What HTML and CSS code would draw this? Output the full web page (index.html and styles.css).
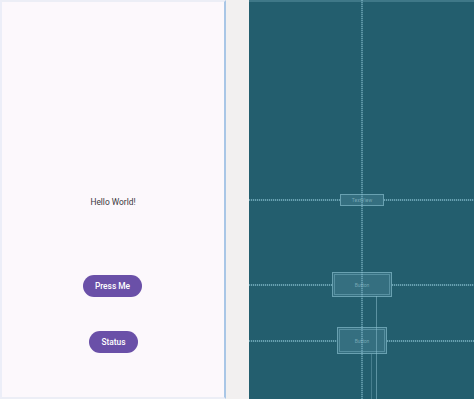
FILE: index.html
```html
<!DOCTYPE html>
<html>
<head>
<meta charset="utf-8">
<link rel="stylesheet" href="styles.css">
</head>
<body>
<div class="editor">
  <div class="design">
    <div class="screen">
      <div class="hello">Hello World!</div>
      <div class="btn btn-press">Press Me</div>
      <div class="btn btn-status">Status</div>
    </div>
  </div>
  <div class="gap"></div>
  <div class="blueprint">
    <div class="topline"></div>
    <div class="vline center"></div>
    <div class="hline" style="top:200px;left:0;width:91px"></div>
    <div class="hline" style="top:200px;left:135px;width:90px"></div>
    <div class="hline" style="top:285px;left:0;width:83px"></div>
    <div class="hline" style="top:285px;left:143px;width:82px"></div>
    <div class="hline" style="top:341px;left:0;width:88px"></div>
    <div class="hline" style="top:341px;left:138px;width:87px"></div>
    <div class="solid" style="left:127px;top:296px;height:103px"></div>
    <div class="solid faint" style="left:122px;top:354px;height:45px"></div>
    <div class="node tv">TextView</div>
    <div class="node b1"><span>Button</span></div>
    <div class="node b2"><span>Button</span></div>
  </div>
</div>
</body>
</html>
```
FILE: styles.css
```css
* { box-sizing: border-box; }
html, body { margin: 0; padding: 0; }
body {
  width: 474px;
  height: 399px;
  overflow: hidden;
  font-family: Roboto, "Noto Sans", sans-serif;
  background: #f2f0f0;
}
.editor {
  display: flex;
  height: 399px;
}
.design {
  width: 226px;
  height: 399px;
  border-top: 2px solid #eceef6;
  border-left: 2px solid #eceef8;
  border-right: 2px solid #a9c6e6;
  border-bottom: 2px solid #eceef6;
  background: #fcf8fc;
}
.screen {
  display: flex;
  flex-direction: column;
  align-items: center;
  padding-top: 194px;
  padding-right: 2px;
}
.hello {
  font-size: 8.4px;
  line-height: 12px;
  color: #3a373d;
  margin-left: 2px;
}
.btn {
  height: 22px;
  border-radius: 11px;
  background: #6a50a8;
  color: #ffffff;
  font-size: 8.4px;
  font-weight: 500;
  display: flex;
  align-items: center;
  justify-content: center;
}
.btn-press {
  width: 59px;
  margin-top: 67px;
  margin-left: 1px;
}
.btn-status {
  width: 49px;
  margin-top: 34px;
  margin-left: 3px;
}
.gap {
  width: 23px;
  background: #f2f0f0;
}
.blueprint {
  position: relative;
  width: 225px;
  height: 399px;
  background: #235e6e;
  overflow: hidden;
}
.topline {
  position: absolute;
  left: 0; right: 0; top: 0;
  height: 2px;
  background: #3f7888;
}
.vline {
  position: absolute;
  top: 0;
  width: 2px;
  height: 399px;
  background: repeating-linear-gradient(to bottom, rgba(130,185,200,0.6) 0 1px, rgba(90,150,170,0.3) 1px 2px);
}
.vline.center { left: 112px; }
.hline {
  position: absolute;
  height: 2px;
  margin-top: -1px;
  background: repeating-linear-gradient(to right, rgba(140,195,210,0.65) 0 1px, rgba(80,140,160,0.3) 1px 2px);
}
.solid {
  position: absolute;
  width: 1px;
  background: rgba(140,190,205,0.55);
}
.solid.faint { background: rgba(140,190,205,0.35); }
.node {
  position: absolute;
  border: 1px solid rgba(140,195,210,0.6);
  background: rgba(120,175,195,0.22);
  color: rgba(160,205,218,0.6);
  font-size: 5px;
  display: flex;
  align-items: center;
  justify-content: center;
}
.node.tv {
  left: 91px; top: 194px;
  width: 44px; height: 12px;
}
.node.b1 {
  left: 83px; top: 272px;
  width: 60px; height: 25px;
  padding: 1px;
}
.node.b2 {
  left: 88px; top: 327px;
  width: 50px; height: 27px;
  padding: 1px;
}
.node span {
  flex: 1;
  align-self: stretch;
  border: 1px solid rgba(140,195,210,0.4);
  display: flex;
  align-items: center;
  justify-content: center;
}
```
